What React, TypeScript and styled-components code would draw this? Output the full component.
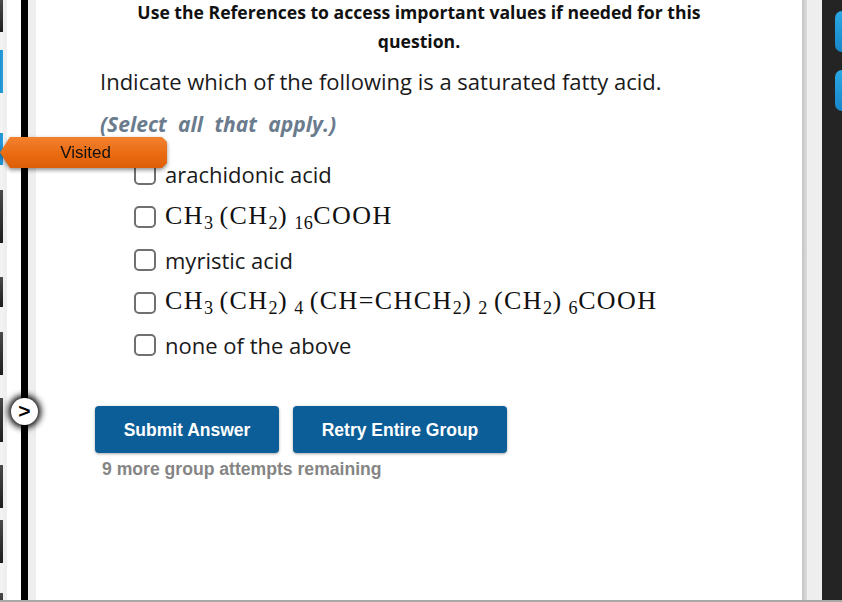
import React from "react";
import styled, { createGlobalStyle } from "styled-components";

const Global = createGlobalStyle`
  html, body { margin: 0; padding: 0; background: #fff; overflow: hidden; }
  #root { width: 842px; height: 602px; }
`;

const Frame = styled.div`
  position: relative;
  display: flex;
  width: 842px;
  height: 602px;
  box-sizing: border-box;
  border-bottom: 2px solid #a8a8a8;
  overflow: hidden;
`;

const LeftTabs = styled.div`
  display: flex;
  flex-direction: column;
  width: 3px;
  background: #f2f2f2;
`;

const TabSeg = styled.div<{ $h: number; $gap: number; $tone: "dark" | "blue" }>`
  height: ${(p) => p.$h}px;
  margin-top: ${(p) => p.$gap}px;
  flex-shrink: 0;
  background: ${(p) =>
    p.$tone === "blue"
      ? "linear-gradient(90deg, #1f8fd0, #2aa0e0)"
      : "linear-gradient(180deg, #4a4a4a, #1e1e1e)"};
`;

const Strip = styled.div<{ $w: number; $bg: string }>`
  width: ${(p) => p.$w}px;
  flex-shrink: 0;
  background: ${(p) => p.$bg};
`;

const Main = styled.main`
  flex: 1;
  background: #fff;
  display: flex;
  flex-direction: column;
  padding-left: 64px;
  box-sizing: border-box;
`;

const Heading = styled.div`
  width: 620px;
  margin: -2px 0 0 -64px;
  align-self: center;
  text-align: center;
  font-family: "Open Sans", sans-serif;
  font-weight: 700;
  font-size: 17.6px;
  line-height: 29px;
  color: #111;
`;

const Question = styled.div`
  margin-top: 10px;
  font-family: "Open Sans", sans-serif;
  font-size: 22px;
  line-height: 30px;
  color: #1a1a1a;
`;

const Hint = styled.div`
  margin-top: 13px;
  font-family: "Open Sans", sans-serif;
  font-style: italic;
  font-weight: 700;
  font-size: 21px;
  line-height: 30px;
  word-spacing: 6px;
  color: #6a7b8d;
`;

const Options = styled.div`
  margin-top: 14px;
  margin-left: 34px;
  display: flex;
  flex-direction: column;
`;

const Option = styled.label`
  display: flex;
  align-items: center;
  height: 42.75px;
  gap: 9px;
`;

const Box = styled.span`
  width: 18px;
  height: 18px;
  border: 2px solid #707070;
  border-radius: 5px;
  background: #fff;
  flex-shrink: 0;
`;

const OptText = styled.span`
  font-family: "Open Sans", sans-serif;
  font-size: 22px;
  color: #1a1a1a;
`;

const MathText = styled.span`
  font-family: "Liberation Serif", serif;
  font-size: 26px;
  letter-spacing: 1.4px;
  color: #111;
  white-space: pre;
  margin-top: -3px;
  sub {
    font-size: 0.7em;
    vertical-align: -0.25em;
    line-height: 0;
    letter-spacing: 0.5px;
  }
`;

const Sp = styled.span`
  display: inline-block;
  width: 6px;
`;

const Buttons = styled.div`
  margin-top: 39px;
  margin-left: -5px;
  display: flex;
  gap: 14px;
`;

const Button = styled.button<{ $w: number }>`
  width: ${(p) => p.$w}px;
  height: 47px;
  border: none;
  border-radius: 4px;
  background: #0c5e98;
  color: #fff;
  font-family: "Liberation Sans", Arial, sans-serif;
  font-weight: 700;
  font-size: 17.5px;
  box-shadow: 0 1px 3px rgba(0, 0, 0, 0.35);
  padding: 2px 0 0;
`;

const Attempts = styled.div`
  margin-top: 6px;
  margin-left: 2px;
  font-family: "Liberation Sans", Arial, sans-serif;
  font-weight: 700;
  font-size: 17.6px;
  line-height: 20px;
  color: #858585;
`;

const RightShadow = styled.div`
  width: 5px;
  flex-shrink: 0;
  background: linear-gradient(90deg, #c4c4c4, #dcdcdc);
`;

const RightRail = styled.div`
  width: 20px;
  flex-shrink: 0;
  background: #242424;
  display: flex;
  flex-direction: column;
  align-items: flex-end;
  padding-top: 11px;
  gap: 18px;
  box-sizing: border-box;
`;

const RailTab = styled.div`
  width: 7px;
  height: 41px;
  border-radius: 8px 0 0 8px;
  background: linear-gradient(180deg, #2aa8e6, #1786c8);
`;

const VisitedTag = styled.div`
  position: absolute;
  left: 0;
  top: 137px;
  width: 167px;
  height: 31px;
  filter: drop-shadow(0 2px 2px rgba(0, 0, 0, 0.45));
`;

const VisitedBody = styled.div`
  width: 100%;
  height: 100%;
  box-sizing: border-box;
  background: linear-gradient(180deg, #f3812f 0%, #e8690f 60%, #dc5e08 100%);
  clip-path: polygon(10px 0, calc(100% - 5px) 0, 100% 5px, 100% calc(100% - 5px), calc(100% - 5px) 100%, 10px 100%, 0 50%);
  display: flex;
  align-items: center;
  justify-content: center;
  padding-left: 4px;
  font-family: "Liberation Sans", Arial, sans-serif;
  font-size: 17px;
  color: #111;
`;

const ExpandKnob = styled.div`
  position: absolute;
  left: 11px;
  top: 398px;
  width: 27px;
  height: 27px;
  border-radius: 50%;
  background: #fff;
  box-shadow: 0 0 6px 3px rgba(0, 0, 0, 0.95);
  display: flex;
  align-items: center;
  justify-content: center;
  font-family: "Liberation Sans", Arial, sans-serif;
  font-weight: 700;
  font-size: 21px;
  color: #000;
  line-height: 1;
  padding-bottom: 2px;
  box-sizing: border-box;
`;

const tabs: { h: number; gap: number; tone: "dark" | "blue" }[] = [
  { h: 32, gap: 0, tone: "dark" },
  { h: 43, gap: 18, tone: "blue" },
  { h: 32, gap: 40, tone: "blue" },
  { h: 53, gap: 25, tone: "dark" },
  { h: 30, gap: 34, tone: "dark" },
  { h: 43, gap: 25, tone: "dark" },
  { h: 44, gap: 23, tone: "dark" },
  { h: 43, gap: 23, tone: "dark" },
  { h: 43, gap: 12, tone: "dark" },
  { h: 20, gap: 30, tone: "dark" },
];

export default function App() {
  return (
    <>
      <Global />
      <Frame>
        <LeftTabs>
          {tabs.map((t, i) => (
            <TabSeg key={i} $h={t.h} $gap={t.gap} $tone={t.tone} />
          ))}
        </LeftTabs>
        <Strip $w={4} $bg="#efefef" />
        <Strip $w={14} $bg="#fff" />
        <Strip $w={7} $bg="#000" />
        <Strip $w={8} $bg="#eeeeee" />
        <Main>
          <Heading>Use the References to access important values if needed for this question.</Heading>
          <Question>Indicate which of the following is a saturated fatty acid.</Question>
          <Hint>(Select all that apply.)</Hint>
          <Options>
            <Option>
              <Box />
              <OptText>arachidonic acid</OptText>
            </Option>
            <Option>
              <Box />
              <MathText>
                CH<sub>3</sub>
                <Sp />(CH<sub>2</sub>)<Sp />
                <sub>16</sub>COOH
              </MathText>
            </Option>
            <Option>
              <Box />
              <OptText>myristic acid</OptText>
            </Option>
            <Option>
              <Box />
              <MathText>
                CH<sub>3</sub>
                <Sp />(CH<sub>2</sub>)<Sp />
                <sub>4</sub>
                <Sp />(CH=CHCH<sub>2</sub>)<Sp />
                <sub>2</sub>
                <Sp />(CH<sub>2</sub>)<Sp />
                <sub>6</sub>COOH
              </MathText>
            </Option>
            <Option>
              <Box />
              <OptText>none of the above</OptText>
            </Option>
          </Options>
          <Buttons>
            <Button $w={184}>Submit Answer</Button>
            <Button $w={214}>Retry Entire Group</Button>
          </Buttons>
          <Attempts>9 more group attempts remaining</Attempts>
        </Main>
        <RightShadow />
        <Strip $w={15} $bg="#eeeeee" />
        <RightRail>
          <RailTab />
          <RailTab />
        </RightRail>
        <VisitedTag>
          <VisitedBody>Visited</VisitedBody>
        </VisitedTag>
        <ExpandKnob>&gt;</ExpandKnob>
      </Frame>
    </>
  );
}
